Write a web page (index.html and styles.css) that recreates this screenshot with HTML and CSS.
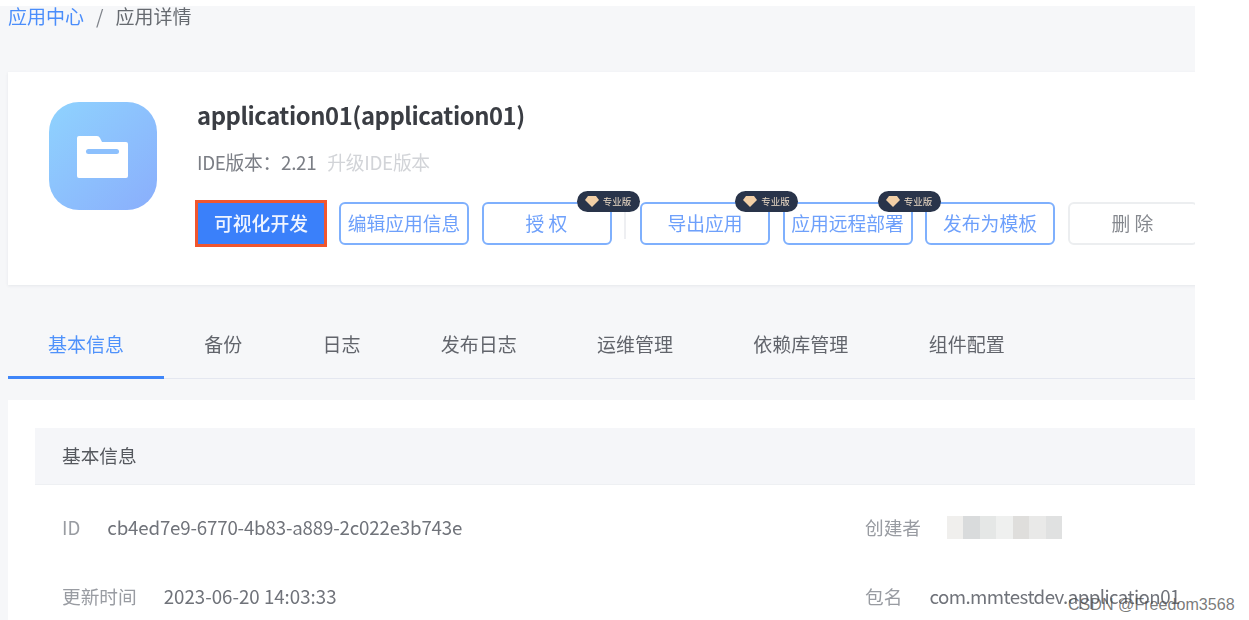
FILE: index.html
```html
<!DOCTYPE html>
<html lang="zh-CN">
<head>
<meta charset="utf-8">
<title>应用详情</title>
<link rel="stylesheet" href="styles.css">
</head>
<body>
<main class="page">
  <nav class="crumbs"><a class="crumb-link">应用中心</a><span class="crumb-sep">/</span><span class="crumb-current">应用详情</span></nav>
  <section class="app-card">
    <div class="app-icon">
      <svg class="folder" width="51" height="42" viewBox="0 0 51 42"><path d="M2 0H20Q22 0 23 2L25 6H49Q51 6 51 8V40Q51 42 49 42H2Q0 42 0 40V2Q0 0 2 0Z" fill="#fff"/><rect x="9" y="13" width="33" height="5" rx="2.5" fill="#8cc0fd"/></svg>
    </div>
    <div class="app-info">
      <h1 class="app-title">application01(application01)</h1>
      <p class="app-version"><span>IDE版本：2.21</span><span class="upgrade">升级IDE版本</span></p>
      <div class="actions">
        <button class="btn btn-primary">可视化开发</button>
        <button class="btn">编辑应用信息</button>
        <button class="btn">授 权<span class="pro"><svg width="14" height="11" viewBox="0 0 14 11"><path d="M3 0H11L14 4L7 11L0 4Z" fill="#f2cfa6"/></svg>专业版</span></button>
        <span class="divider"></span>
        <button class="btn">导出应用<span class="pro"><svg width="14" height="11" viewBox="0 0 14 11"><path d="M3 0H11L14 4L7 11L0 4Z" fill="#f2cfa6"/></svg>专业版</span></button>
        <button class="btn">应用远程部署<span class="pro"><svg width="14" height="11" viewBox="0 0 14 11"><path d="M3 0H11L14 4L7 11L0 4Z" fill="#f2cfa6"/></svg>专业版</span></button>
        <button class="btn">发布为模板</button>
        <button class="btn btn-muted">删 除</button>
      </div>
    </div>
  </section>
  <div class="tabs">
    <span class="tab tab-active">基本信息</span>
    <span class="tab">备份</span>
    <span class="tab">日志</span>
    <span class="tab">发布日志</span>
    <span class="tab">运维管理</span>
    <span class="tab">依赖库管理</span>
    <span class="tab">组件配置</span>
  </div>
  <section class="panel">
    <h2 class="panel-head">基本信息</h2>
    <div class="fields">
      <div class="field"><span class="label">ID</span><span class="value value-id">cb4ed7e9-6770-4b83-a889-2c022e3b743e</span></div>
      <div class="field"><span class="label">创建者</span><span class="masked"><i class="m1"></i><i class="m2"></i><i class="m3"></i><i class="m4"></i><i class="m5"></i><i class="m6"></i><i class="m7"></i></span></div>
      <div class="field"><span class="label">更新时间</span><span class="value">2023-06-20 14:03:33</span></div>
      <div class="field"><span class="label">包名</span><span class="value value-tight">com.mmtestdev.application01</span></div>
    </div>
  </section>
</main>
<div class="watermark">CSDN @Freedom3568</div>
</body>
</html>
```
FILE: styles.css
```css
* { box-sizing: border-box; }
html, body { margin: 0; height: 620px; overflow: hidden; background: #fff; }
body { font-family: "Noto Sans CJK SC", "Noto Sans", sans-serif; position: relative; }
.page {
  width: 1195px; height: 620px; padding-left: 8px; border-top: 6px solid #fff;
  background: #f6f7f9; overflow: hidden; filter: blur(0.7px); color: #5e6168;
}
.crumbs { display: flex; align-items: center; height: 20px; font-size: 19px; line-height: 20px; }
.crumb-link { color: #4a8dfb; }
.crumb-sep { margin: 0 12px; color: #7f838a; }
.crumb-current { color: #666a70; }
.app-card {
  display: flex; margin-top: 46px; height: 213px; width: 1240px; padding: 30px 0 0 41px;
  background: #fff; box-shadow: 0 1px 3px rgba(40, 50, 80, .08);
}
.app-icon {
  width: 108px; height: 108px; border-radius: 30px; flex: none; display: flex; align-items: center; justify-content: center;
  background: linear-gradient(135deg, #8fd3fe 0%, #8aaefc 100%);
}
.folder { margin: 2px 0 0 -2px; }
.app-info { margin-left: 40px; margin-top: -3px; }
.app-title { margin: 0; font-size: 23.8px; line-height: 32px; font-weight: 700; letter-spacing: -.42px; color: #3a3d43; }
.app-version { margin: 16px 0 0; display: flex; gap: 11px; font-size: 18.8px; line-height: 30px; letter-spacing: -.3px; color: #7b7e85; }
.upgrade { color: #d2d4d8; }
.actions { display: flex; align-items: center; gap: 12.5px; margin-top: 23px; margin-left: -2px; }
.btn {
  position: relative; flex: none; width: 130px; height: 43px; padding: 0 0 3px; font: inherit; font-size: 18.8px;
  color: #6ea0fb; background: #fff; border: 2px solid #7fb0fd; border-radius: 6px;
}
.btn-primary { width: 132px; height: 47px; margin-right: -.5px; color: #f0f5ff; font-weight: 500; background: #3a80fa; border: 3px solid #f0562e; border-radius: 0; }
.btn-muted { color: #85888e; border-color: #eceef0; }
.divider { width: 2px; height: 30px; margin-right: 1.5px; background: #eeeff2; }
.pro {
  position: absolute; z-index: 2; top: -13px; right: -30px; display: flex; align-items: center; justify-content: center; gap: 4px;
  width: 63px; height: 21px; border-radius: 11px; background: #29344a; color: #e9d8c4; font-size: 9.5px; line-height: 1;
}
.tabs { display: flex; height: 73px; margin-top: 21px; border-bottom: 1px solid #e4e7f0; }
.tab { height: 73px; padding: 0 40.15px; font-size: 19px; line-height: 76px; color: #62656c; white-space: nowrap; }
.tab-active { padding: 0 40px; color: #4f92fb; border-bottom: 3px solid #3f86f9; }
.panel { width: 1240px; height: 220px; margin-top: 21px; padding: 28px 0 0 27px; background: #fff; }
.panel-head { width: 1160px; height: 57px; margin: 0; padding-left: 27px; font-size: 18.7px; font-weight: 400; line-height: 53px; color: #55585e; background: #f5f6f9; border-bottom: 1px solid #eef0f3; }
.fields { display: grid; grid-template-columns: 803px 320px; row-gap: 41px; padding: 28px 0 0 27px; }
.field { display: flex; align-items: center; height: 28px; font-size: 18.7px; line-height: 28px; white-space: nowrap; }
.label { color: #999ca2; margin-right: 27px; }
.value { color: #70737a; }
.value-id { letter-spacing: -.17px; }
.value-tight { letter-spacing: -.55px; }
.masked { display: flex; width: 115px; height: 23px; margin: 0 0 0 -1px; }
.masked i { flex: 1; }
.m1 { background: #f0efed; } .m2 { background: #d9dbdc; } .m3 { background: #e5e7e6; } .m4 { background: #eff0ef; }
.m5 { background: #dfdedc; } .m6 { background: #e9e9e8; } .m7 { background: #e0e1e1; }
.watermark {
  position: absolute; left: 1068px; top: 592px; font-family: "Liberation Sans", sans-serif; font-size: 16.1px; line-height: 24px;
  color: rgba(70, 70, 70, .72); white-space: nowrap;
}
```
